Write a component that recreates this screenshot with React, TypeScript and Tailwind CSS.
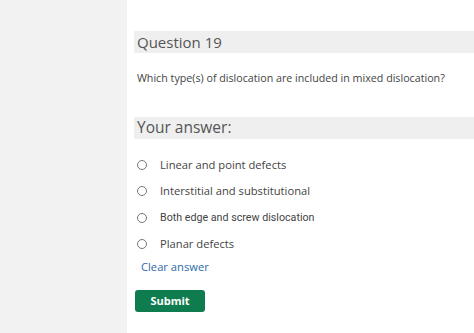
import React from "react";

const options = [
  { label: "Linear and point defects", roboto: false },
  { label: "Interstitial and substitutional", roboto: false },
  { label: "Both edge and screw dislocation", roboto: true },
  { label: "Planar defects", roboto: false },
];

export default function App() {
  return (
    <div className="flex w-[474px] h-[333px] bg-white overflow-hidden" style={{ fontFamily: "'Open Sans', sans-serif" }}>
      <div className="w-[127px] shrink-0 bg-[#f2f2f2]" />
      <div className="flex-1 pl-[7px] pt-[31px]">
        <div className="h-[22px] bg-[#efefef] flex items-center pl-[3px] text-[15px] text-[#555555]">Question 19</div>
        <div className="mt-[17px] pl-[3px] text-[10.7px] text-[#444444] leading-[16px]">
          Which type(s) of dislocation are included in mixed dislocation?
        </div>
        <div className="mt-[31px] h-[22px] bg-[#efefef] flex items-center pl-[3px] text-[15.5px] text-[#555555]">Your answer:</div>
        <div className="mt-[13px] flex flex-col">
          {options.map((o) => (
            <label key={o.label} className="h-[26.3px] flex items-center">
              <span className="ml-[3px] w-[10px] h-[10px] rounded-full border border-[#777777] bg-white shrink-0" />
              <span
                className={o.roboto ? "ml-[13px] text-[10.7px] text-[#444444]" : "ml-[13px] text-[11.2px] text-[#444444]"}
                style={o.roboto ? { fontFamily: "Roboto, sans-serif" } : undefined}
              >
                {o.label}
              </span>
            </label>
          ))}
        </div>
        <div className="mt-[1px] pl-[7px] text-[11.2px] text-[#2d6aa8] leading-[18px]">Clear answer</div>
        <button className="mt-[14px] ml-[1px] w-[70px] h-[22px] rounded-[3px] bg-[#0e7c4f] text-white text-[11px] font-bold flex items-center justify-center">
          Submit
        </button>
      </div>
    </div>
  );
}
